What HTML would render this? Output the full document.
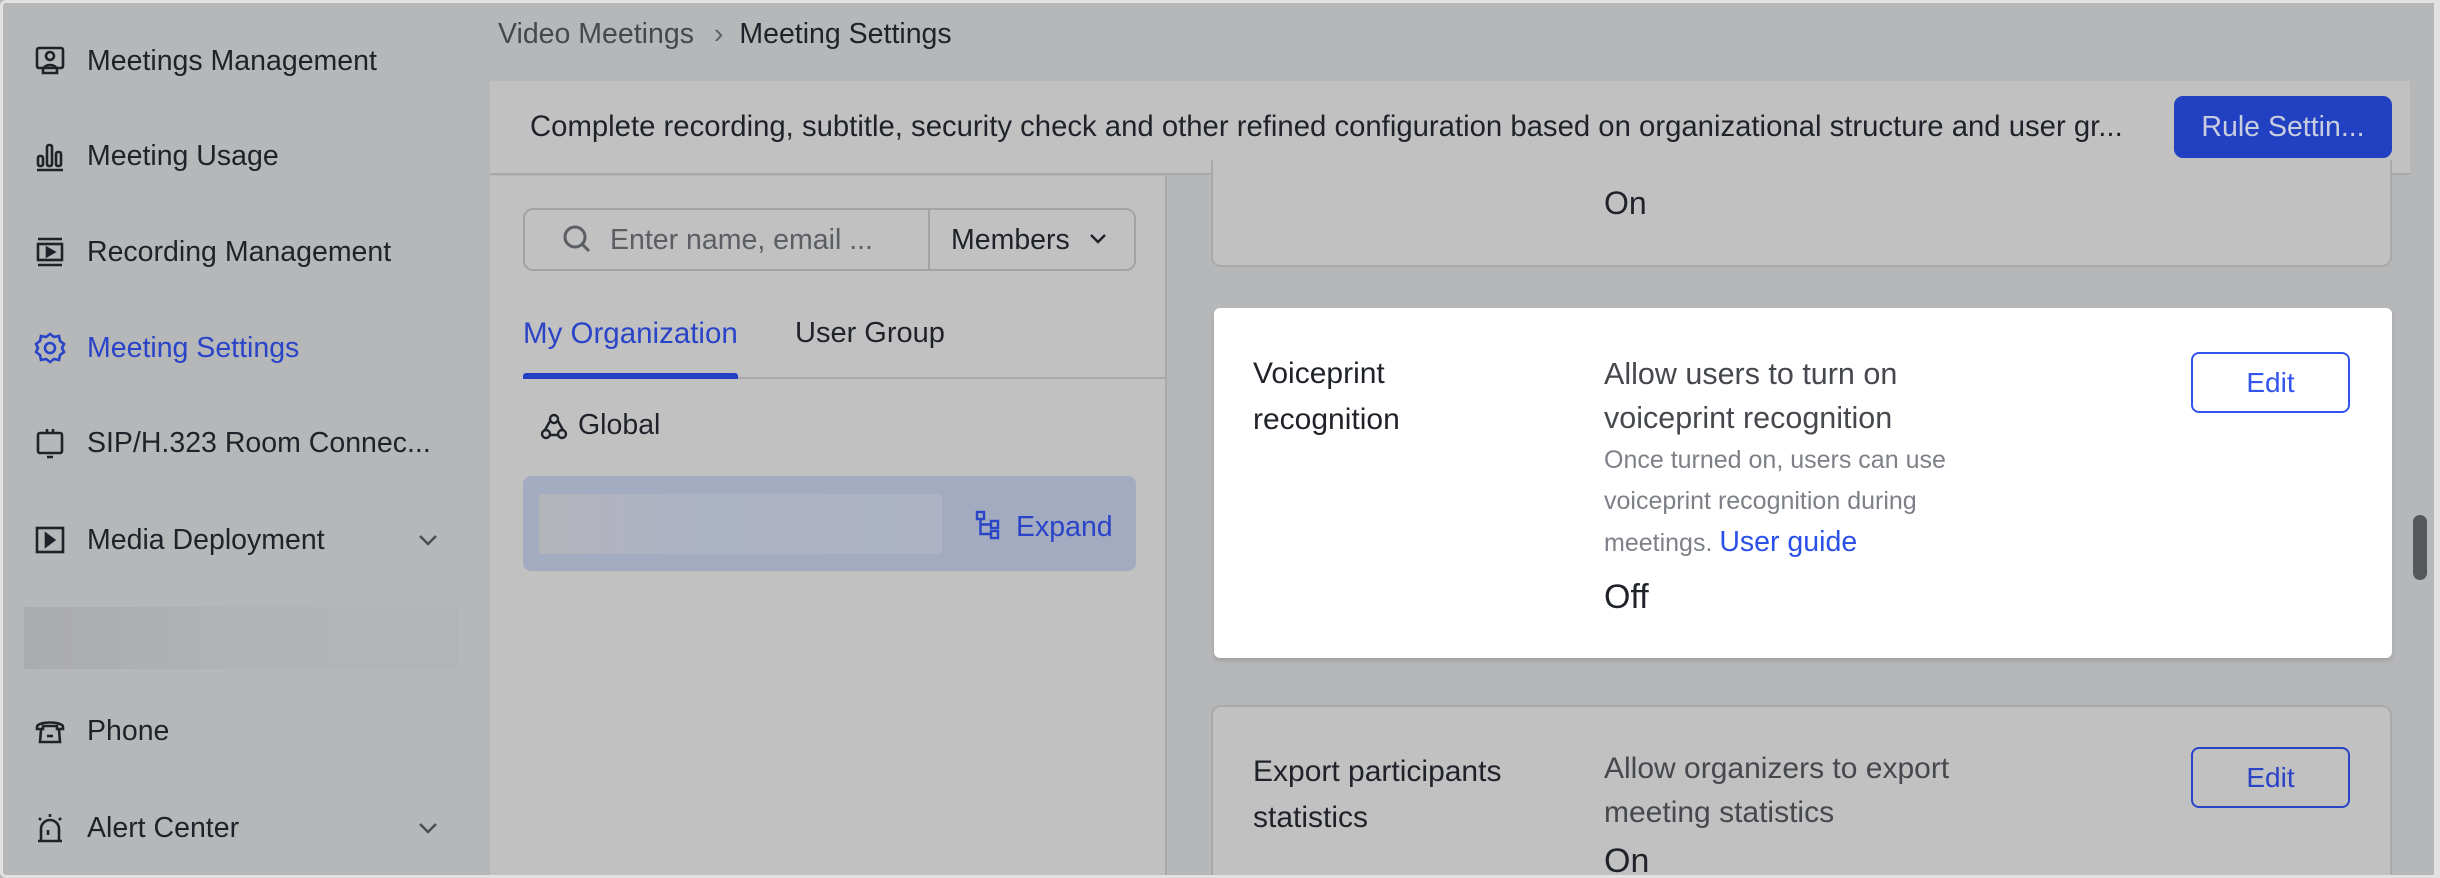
<!DOCTYPE html>
<html style="overflow:hidden;width:2440px;height:878px"><head><meta charset="utf-8"><style>
*{margin:0;padding:0;box-sizing:border-box}
body{width:2440px;height:878px;overflow:hidden;background:#b6b7b9;font-family:"Liberation Sans",sans-serif;position:relative;color:#1f2329}
.abs{position:absolute}
.frame{position:absolute;left:0;top:0;width:2440px;height:878px;border:3px solid #e2e2e2;border-radius:6px;pointer-events:none}
.nav{position:absolute;left:34px;font-size:28.5px;color:#1f2329;display:flex;align-items:center;height:40px}
.nav svg{width:32px;height:32px;margin-right:21px;flex:none}
.chev{position:absolute;left:416px;width:24px;height:24px}
.t28{font-size:28.5px}
.card{position:absolute;left:1211px;width:1181px;background:#c1c1c1;border:2px solid #a9a9aa;border-radius:10px}
.edit{position:absolute;left:2191px;width:159px;height:61px;border:2px solid #2a44c8;border-radius:8px;color:#2a44c8;font-size:28px;display:flex;align-items:center;justify-content:center}
</style></head><body>
<div class="abs" style="left:0;top:0;width:490px;height:878px;background:#b6b7b9"></div>
<div class="nav" style="top:41px"><svg viewBox="0 0 32 32" fill="none" stroke="#1f2329" stroke-width="2.6"><rect x="3" y="3" width="26" height="20" rx="2"/><circle cx="16" cy="11" r="4"/><path d="M9 28v-3a7 5 0 0 1 14 0v3z"/></svg>Meetings Management</div>
<div class="nav" style="top:136px"><svg viewBox="0 0 32 32" fill="none" stroke="#1f2329" stroke-width="2.6"><rect x="4" y="16" width="5" height="10" rx="2"/><rect x="13" y="5" width="5" height="21" rx="2"/><rect x="22" y="12" width="5" height="14" rx="2"/><path d="M3 30h26"/></svg>Meeting Usage</div>
<div class="nav" style="top:232px"><svg viewBox="0 0 32 32" fill="none" stroke="#1f2329" stroke-width="2.6"><path d="M4 3h24M4 29h24"/><rect x="4" y="8" width="24" height="16"/><path d="M13 12l7 4-7 4z" fill="#1f2329"/></svg>Recording Management</div>
<div class="nav" style="top:328px;color:#2a44c8"><svg viewBox="0 0 32 32" fill="none" stroke="#2a44c8" stroke-width="2.6"><path d="M16 2l4 3 5-1 1 5 4 3-2 4 2 4-4 3-1 5-5-1-4 3-4-3-5 1-1-5-4-3 2-4-2-4 4-3 1-5 5 1z"/><circle cx="16" cy="16" r="5"/></svg>Meeting Settings</div>
<div class="nav" style="top:423px"><svg viewBox="0 0 32 32" fill="none" stroke="#1f2329" stroke-width="2.6"><rect x="4" y="6" width="24" height="20" rx="2"/><path d="M13 2v4M19 2v4M13 30h6"/></svg>SIP/H.323 Room Connec...</div>
<div class="nav" style="top:520px"><svg viewBox="0 0 32 32" fill="none" stroke="#1f2329" stroke-width="2.6"><rect x="3" y="4" width="26" height="24"/><path d="M12 10l8 6-8 6z" fill="#1f2329"/></svg>Media Deployment</div>
<svg class="chev" style="top:528px" viewBox="0 0 24 24" fill="none" stroke="#4a4d52" stroke-width="2.4"><path d="M4 8l8 8 8-8"/></svg>
<div class="abs" style="left:24px;top:607px;width:434px;height:62px;background:linear-gradient(90deg,#aaabad,#b1b3b5 50%,#b3b4b6)"></div>
<div class="nav" style="top:711px"><svg viewBox="0 0 32 32" fill="none" stroke="#1f2329" stroke-width="2.6"><path d="M3 12c0-6 26-6 26 0v2h-6v-3H9v3H3z"/><path d="M7 15l-1 12h20l-1-12"/><path d="M13 21h6"/></svg>Phone</div>
<div class="nav" style="top:808px"><svg viewBox="0 0 32 32" fill="none" stroke="#1f2329" stroke-width="2.6"><path d="M7 28V17a9 9 0 0 1 18 0v11M4 29h24M14 18v5"/><path d="M16 2v3M5 6l2 2M27 6l-2 2"/></svg>Alert Center</div>
<svg class="chev" style="top:816px" viewBox="0 0 24 24" fill="none" stroke="#4a4d52" stroke-width="2.4"><path d="M4 8l8 8 8-8"/></svg>

<div class="abs" style="left:498px;top:18px;font-size:28.5px;color:#45484d">Video Meetings <span style="display:inline-block;margin:0 16px 0 12px;color:#60646a">&#x203A;</span><span style="color:#1f2329">Meeting Settings</span></div>

<div class="abs" style="left:490px;top:81px;width:1920px;height:94px;background:#c1c1c1;border-bottom:2px solid #a9a9aa"></div>
<div class="abs" style="left:530px;top:110px;font-size:29.3px;color:#1f2329;white-space:nowrap">Complete recording, subtitle, security check and other refined configuration based on organizational structure and user gr...</div>
<div class="abs" style="left:2174px;top:96px;width:218px;height:62px;background:#2141c2;border-radius:9px;color:#c8cde0;font-size:28.5px;display:flex;align-items:center;justify-content:center">Rule Settin...</div>

<div class="abs" style="left:490px;top:176px;width:677px;height:702px;background:#c1c1c1;border-right:2px solid #a9a9aa"></div>
<div class="abs" style="left:523px;top:208px;width:613px;height:63px;border:2px solid #a2a3a5;border-radius:10px"></div>
<div class="abs" style="left:928px;top:209px;width:2px;height:61px;background:#a2a3a5"></div>
<svg class="abs" style="left:561px;top:223px" width="32" height="32" viewBox="0 0 32 32" fill="none" stroke="#5b5e63" stroke-width="3"><circle cx="14" cy="14" r="10"/><path d="M21 21l7 7"/></svg>
<div class="abs t28" style="left:610px;top:224px;color:#5b5e63">Enter name, email ...</div>
<div class="abs t28" style="left:951px;top:224px;color:#1f2329">Members</div>
<svg class="abs" style="left:1088px;top:231px" width="20" height="16" viewBox="0 0 20 16" fill="none" stroke="#1f2329" stroke-width="2.4"><path d="M3 4l7 7 7-7"/></svg>
<div class="abs" style="left:523px;top:317px;font-size:29.5px;color:#2a44c8">My Organization</div>
<div class="abs" style="left:795px;top:317px;font-size:29px;color:#1f2329">User Group</div>
<div class="abs" style="left:523px;top:377px;width:644px;height:2px;background:#a9a9aa"></div>
<div class="abs" style="left:523px;top:373px;width:215px;height:6px;background:#2141c2;border-radius:3px 3px 0 0"></div>
<svg class="abs" style="left:540px;top:412px" width="28" height="28" viewBox="0 0 28 28" fill="none" stroke="#1f2329" stroke-width="2.4"><circle cx="14" cy="7" r="4"/><circle cx="6" cy="22" r="4"/><circle cx="22" cy="22" r="4"/><path d="M10 9L5 18M18 9l5 9M10 23h8"/></svg>
<div class="abs t28" style="left:578px;top:409px;color:#1f2329">Global</div>
<div class="abs" style="left:523px;top:476px;width:613px;height:95px;background:#a3abc0;border-radius:8px"></div>
<div class="abs" style="left:539px;top:494px;width:403px;height:60px;background:linear-gradient(90deg,#b4b4bb,#abb2c4 40%,#adb3c5)"></div>
<svg class="abs" style="left:975px;top:510px" width="26" height="30" viewBox="0 0 26 30" fill="none" stroke="#2a44c8" stroke-width="2.4"><rect x="2" y="2" width="7" height="7"/><rect x="16" y="11" width="7" height="7"/><rect x="16" y="21" width="7" height="7"/><path d="M5.5 9v15H16M5.5 14.5H16"/></svg>
<div class="abs t28" style="left:1016px;top:511px;color:#2a44c8">Expand</div>

<div class="card" style="top:160px;height:107px;border-top:none;border-radius:0 0 10px 10px"></div>
<div class="abs" style="left:1604px;top:185px;font-size:32px;color:#1f2329">On</div>

<div class="abs" style="left:1214px;top:308px;width:1178px;height:350px;background:#fff;border-radius:6px;box-shadow:0 3px 4px rgba(0,0,0,.12)"></div>
<div class="abs" style="left:1253px;top:351px;font-size:30px;line-height:46px;color:#1f2329">Voiceprint<br>recognition</div>
<div class="abs" style="left:1604px;top:352px;font-size:30.5px;line-height:44px;color:#45484d">Allow users to turn on<br>voiceprint recognition</div>
<div class="abs" style="left:1604px;top:440px;font-size:25px;line-height:41px;color:#7d8187">Once turned on, users can use<br>voiceprint recognition during<br>meetings. <span style="color:#2a50e8;font-size:28.5px">User guide</span></div>
<div class="abs" style="left:1604px;top:578px;font-size:34px;color:#1f2329">Off</div>
<div class="edit" style="top:352px;border-color:#3355ee;color:#3355ee">Edit</div>

<div class="card" style="top:705px;height:180px"></div>
<div class="abs" style="left:1253px;top:749px;font-size:30px;line-height:46px;color:#1f2329">Export participants<br>statistics</div>
<div class="abs" style="left:1604px;top:747px;font-size:30px;line-height:44px;color:#45484d">Allow organizers to export<br>meeting statistics</div>
<div class="abs" style="left:1604px;top:842px;font-size:34px;color:#1f2329">On</div>
<div class="edit" style="top:747px">Edit</div>

<div class="abs" style="left:2413px;top:515px;width:14px;height:65px;background:#55575b;border-radius:7px"></div>
<div class="abs" style="left:2434px;top:0;width:6px;height:878px;background:#e2e2e2"></div>
<div class="frame"></div>
</body></html>
